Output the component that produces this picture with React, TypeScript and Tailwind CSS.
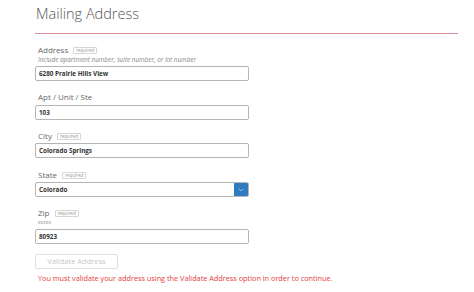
import { ChevronDown } from "lucide-react"

function Required() {
  return (
    <span className="inline-flex items-center h-[7px] px-[2px] border border-[#d6d6d6] rounded-[1px] text-[4.5px] leading-none text-[#999]">
      required
    </span>
  )
}

function Label({ text, required }: { text: string; required?: boolean }) {
  return (
    <div className="flex items-center gap-[5px] h-[10px] pl-[3px] text-[8px] leading-none text-[#666]">
      <span>{text}</span>
      {required && <Required />}
    </div>
  )
}

function Field({ value }: { value: string }) {
  return (
    <div className="flex items-center h-[15px] px-[3px] border border-[#b5b5b5] rounded-[2px] text-[6.3px] font-bold text-[#333]">
      {value}
    </div>
  )
}

export default function App() {
  return (
    <div className="w-[474px] h-[292px] bg-white pl-[35px] pr-[16px] font-['Open_Sans',sans-serif]">
      <h1 className="h-[33px] pt-[3px] pl-[1px] text-[14.5px] leading-[22px] font-light text-[#555]">
        Mailing Address
      </h1>
      <div className="h-px bg-[#dc8d99]" />

      <div className="w-[214px] flex flex-col">
        {/* Address */}
        <div className="mt-[11px]">
          <Label text="Address" required />
          <div className="pl-[3px] h-[9px] text-[6.35px] leading-[9px] italic text-[#888]">
            Include apartment number, suite number, or lot number
          </div>
          <div className="mt-[2px]">
            <Field value="6280 Prairie Hills View" />
          </div>
        </div>

        {/* Apt */}
        <div className="mt-[11px]">
          <Label text="Apt / Unit / Ste" />
          <div className="mt-[3px]">
            <Field value="103" />
          </div>
        </div>

        {/* City */}
        <div className="mt-[11px]">
          <Label text="City" required />
          <div className="mt-[2px]">
            <Field value="Colorado Springs" />
          </div>
        </div>

        {/* State */}
        <div className="mt-[12px]">
          <Label text="State" required />
          <div className="mt-[2px] flex items-stretch h-[15px] border border-[#b5b5b5] rounded-[2px] overflow-hidden">
            <div className="flex-1 flex items-center px-[3px] text-[6.3px] font-bold text-[#333]">Colorado</div>
            <div className="w-[14px] flex items-center justify-center bg-[#2f7bc0]">
              <ChevronDown className="w-[8px] h-[8px] text-[#dbe9f6]" strokeWidth={1.75} />
            </div>
          </div>
        </div>

        {/* Zip */}
        <div className="mt-[11px]">
          <Label text="Zip" required />
          <div className="pl-[3px] h-[9px] text-[5px] leading-[9px] text-[#888]">xxxxx</div>
          <div className="mt-[2px]">
            <Field value="80923" />
          </div>
        </div>

        <button
          disabled
          className="mt-[10px] w-[83px] h-[15px] flex items-center justify-center border border-[#e0e0e0] rounded-[2px] text-[7.5px] text-[#c8c8c8] bg-white"
        >
          Validate Address
        </button>
      </div>

      <p className="mt-[4px] pl-[3px] text-[7.3px] leading-[10px] text-[#e2403e] whitespace-nowrap">
        You must validate your address using the Validate Address option in order to continue.
      </p>
    </div>
  )
}
